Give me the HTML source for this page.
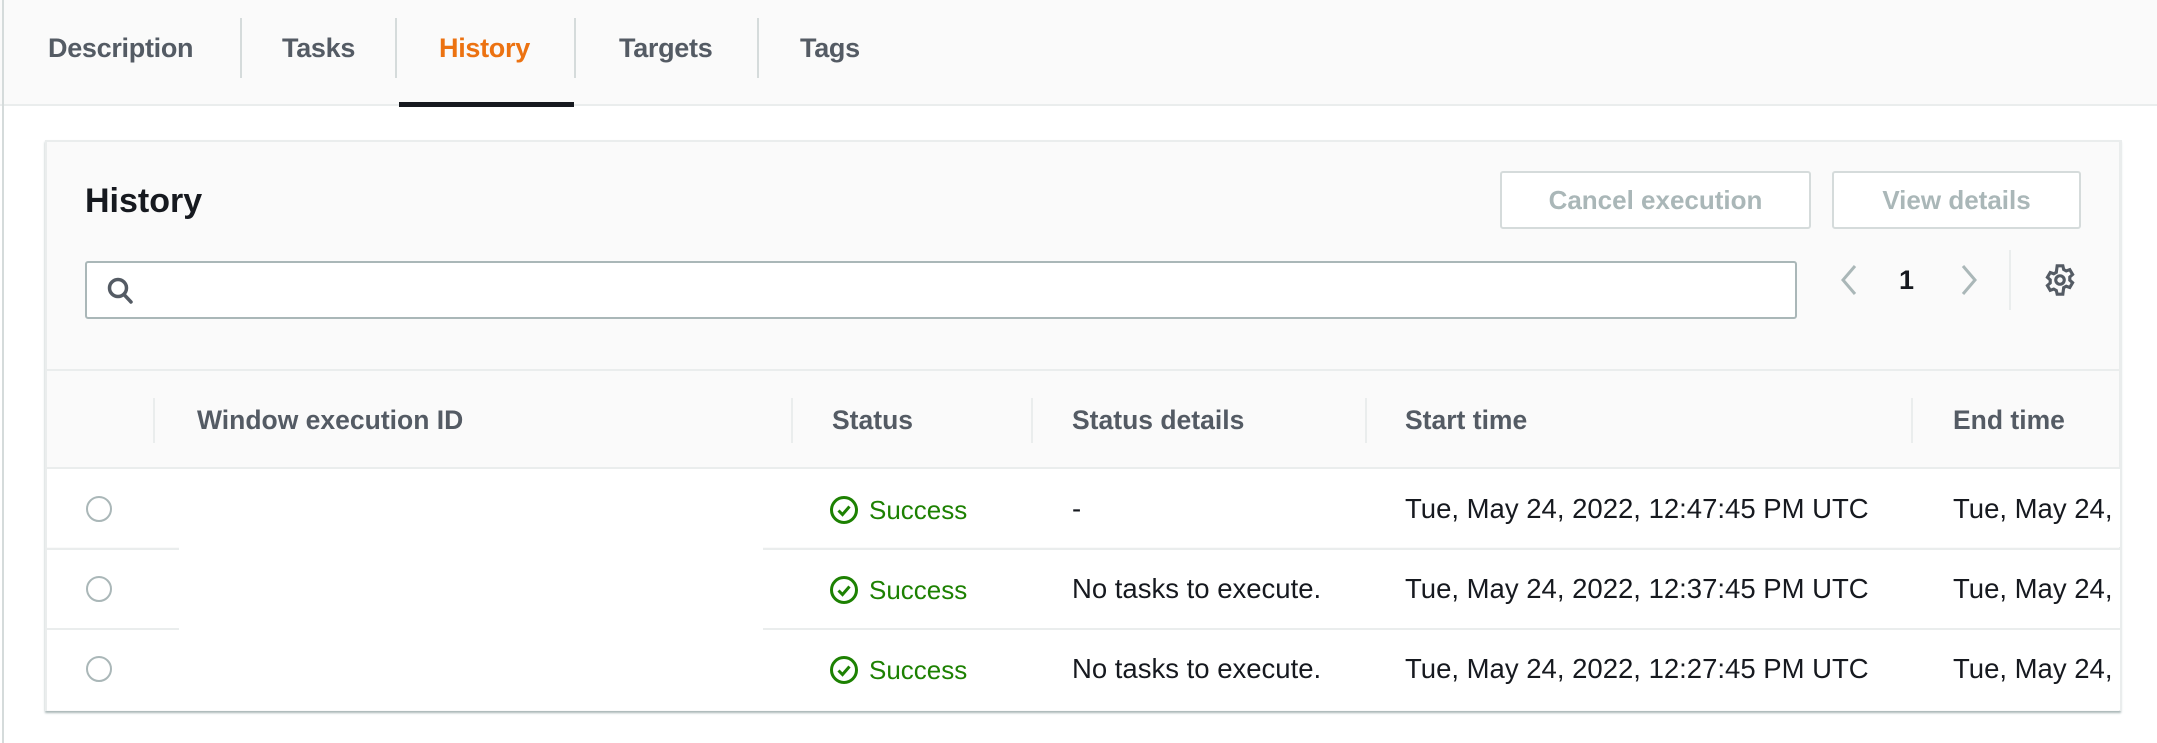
<!DOCTYPE html>
<html><head><meta charset="utf-8"><style>
*{box-sizing:border-box;margin:0;padding:0}
body{width:2157px;height:743px;background:#fff;font-family:"Liberation Sans",Arial,sans-serif;position:relative;overflow:hidden;color:#16191f}
.abs{position:absolute}
.tabbar{left:0;top:0;width:2157px;height:106px;background:#fafafa;border-bottom:2px solid #eaeded}
.vline{left:2px;top:0;width:2px;height:743px;background:#d5dbdb}
.tab{top:30px;font-size:27px;font-weight:bold;color:#545b64;line-height:36px;letter-spacing:-0.3px}
.sep{top:18px;width:2px;height:60px;background:#d5dbdb}
.panel{left:45px;top:140px;width:2076px;height:571px;border:2px solid #eaeded;border-bottom:none;background:#fafafa;box-shadow:0 2px 2px #aab7b8;overflow:hidden}
.btn{top:171px;height:58px;border:2px solid #d5dbdb;border-radius:3px;background:#fff;color:#aab7b8;font-weight:bold;font-size:26px;text-align:center;line-height:54px}
.th{top:403px;font-size:26.5px;font-weight:bold;color:#545b64;line-height:34px}
.csep{top:398px;width:2px;height:45px;background:#eaeded}
.row{left:47px;width:2074px;height:80px;background:#fff;border-top:2px solid #eaeded}
.td{font-size:27.5px;line-height:34px;color:#16191f;white-space:nowrap}
.radio{width:26px;height:26px;border:2px solid #aab7b8;border-radius:50%;background:#fff}
.ok{color:#1d8102;font-size:26px;line-height:34px}
</style></head><body>
<div class="abs tabbar"></div>
<div class="abs vline"></div>
<div class="abs tab" style="left:48px">Description</div>
<div class="abs sep" style="left:240px"></div>
<div class="abs tab" style="left:282px">Tasks</div>
<div class="abs sep" style="left:395px"></div>
<div class="abs tab" style="left:439px;color:#ec7211">History</div>
<div class="abs sep" style="left:574px"></div>
<div class="abs tab" style="left:619px">Targets</div>
<div class="abs sep" style="left:757px"></div>
<div class="abs tab" style="left:800px">Tags</div>
<div class="abs" style="left:399px;top:102px;width:175px;height:5px;background:#16191f"></div>

<div class="abs panel"></div>
<div class="abs" style="left:85px;top:181px;font-size:34px;font-weight:bold;color:#16191f;line-height:40px">History</div>
<div class="abs btn" style="left:1500px;width:311px">Cancel execution</div>
<div class="abs btn" style="left:1832px;width:249px">View details</div>
<div class="abs" style="left:85px;top:261px;width:1712px;height:58px;border:2px solid #aab7b8;border-radius:3px;background:#fff"></div>
<svg class="abs" style="left:106px;top:275px" width="30" height="32" viewBox="0 0 30 32"><circle cx="12" cy="13" r="8.5" fill="none" stroke="#545b64" stroke-width="3.5"/><line x1="18" y1="19.5" x2="25" y2="27" stroke="#545b64" stroke-width="3.5" stroke-linecap="round"/></svg>
<svg class="abs" style="left:1838px;top:264px" width="22" height="32" viewBox="0 0 22 32"><path d="M17 2 L5 16 L17 30" fill="none" stroke="#aab7b8" stroke-width="3"/></svg>
<div class="abs" style="left:1899px;top:263px;font-size:27px;font-weight:bold;line-height:34px">1</div>
<svg class="abs" style="left:1958px;top:264px" width="22" height="32" viewBox="0 0 22 32"><path d="M5 2 L17 16 L5 30" fill="none" stroke="#aab7b8" stroke-width="3"/></svg>
<div class="abs" style="left:2009px;top:250px;width:2px;height:60px;background:#eaeded"></div>
<svg class="abs" style="left:2043px;top:263px" width="34" height="34" viewBox="0 0 24 24"><path fill="none" stroke="#545b64" stroke-width="2.2" d="M10 2h4l.6 2.6 1.8 1 2.5-.9 2 3.4-2 1.8v2.2l2 1.8-2 3.4-2.5-.9-1.8 1L14 22h-4l-.6-2.6-1.8-1-2.5.9-2-3.4 2-1.8v-2.2l-2-1.8 2-3.4 2.5.9 1.8-1z"/><circle cx="12" cy="12" r="3" fill="none" stroke="#545b64" stroke-width="2.2"/></svg>

<div class="abs" style="left:47px;top:369px;width:2074px;height:2px;background:#eaeded"></div>
<div class="abs csep" style="left:153px"></div>
<div class="abs csep" style="left:791px"></div>
<div class="abs csep" style="left:1031px"></div>
<div class="abs csep" style="left:1365px"></div>
<div class="abs csep" style="left:1911px"></div>
<div class="abs th" style="left:197px">Window execution ID</div>
<div class="abs th" style="left:832px">Status</div>
<div class="abs th" style="left:1072px">Status details</div>
<div class="abs th" style="left:1405px">Start time</div>
<div class="abs th" style="left:1953px">End time</div>

<div class="abs row" style="top:467px"></div>
<div class="abs row" style="top:548px"></div>
<div class="abs row" style="top:628px;height:82px"></div>
<div class="abs" style="left:179px;top:545px;width:584px;height:6px;background:#fff"></div>
<div class="abs" style="left:179px;top:625px;width:584px;height:6px;background:#fff"></div>

<div style="position:absolute;left:0;top:0;width:2121px;height:743px;overflow:hidden">
<div class="abs radio" style="left:86px;top:496px"></div>
<svg class="abs" style="left:829px;top:495px" width="30" height="30" viewBox="0 0 30 30"><circle cx="15" cy="15" r="12.5" fill="none" stroke="#1d8102" stroke-width="3"/><path d="M9.5 15.5l4 4 7-8" fill="none" stroke="#1d8102" stroke-width="3"/></svg>
<div class="abs ok" style="left:869px;top:493px">Success</div>
<div class="abs td" style="left:1072px;top:492px">-</div>
<div class="abs td" style="left:1405px;top:492px">Tue, May 24, 2022, 12:47:45 PM UTC</div>
<div class="abs td" style="left:1953px;top:492px">Tue, May 24, 2022</div>

<div class="abs radio" style="left:86px;top:576px"></div>
<svg class="abs" style="left:829px;top:575px" width="30" height="30" viewBox="0 0 30 30"><circle cx="15" cy="15" r="12.5" fill="none" stroke="#1d8102" stroke-width="3"/><path d="M9.5 15.5l4 4 7-8" fill="none" stroke="#1d8102" stroke-width="3"/></svg>
<div class="abs ok" style="left:869px;top:573px">Success</div>
<div class="abs td" style="left:1072px;top:572px">No tasks to execute.</div>
<div class="abs td" style="left:1405px;top:572px">Tue, May 24, 2022, 12:37:45 PM UTC</div>
<div class="abs td" style="left:1953px;top:572px">Tue, May 24, 2022</div>

<div class="abs radio" style="left:86px;top:656px"></div>
<svg class="abs" style="left:829px;top:655px" width="30" height="30" viewBox="0 0 30 30"><circle cx="15" cy="15" r="12.5" fill="none" stroke="#1d8102" stroke-width="3"/><path d="M9.5 15.5l4 4 7-8" fill="none" stroke="#1d8102" stroke-width="3"/></svg>
<div class="abs ok" style="left:869px;top:653px">Success</div>
<div class="abs td" style="left:1072px;top:652px">No tasks to execute.</div>
<div class="abs td" style="left:1405px;top:652px">Tue, May 24, 2022, 12:27:45 PM UTC</div>
<div class="abs td" style="left:1953px;top:652px">Tue, May 24, 2022</div>
</div>
<div class="abs" style="left:2120px;top:140px;width:2px;height:571px;background:#eaeded"></div>
</body></html>
